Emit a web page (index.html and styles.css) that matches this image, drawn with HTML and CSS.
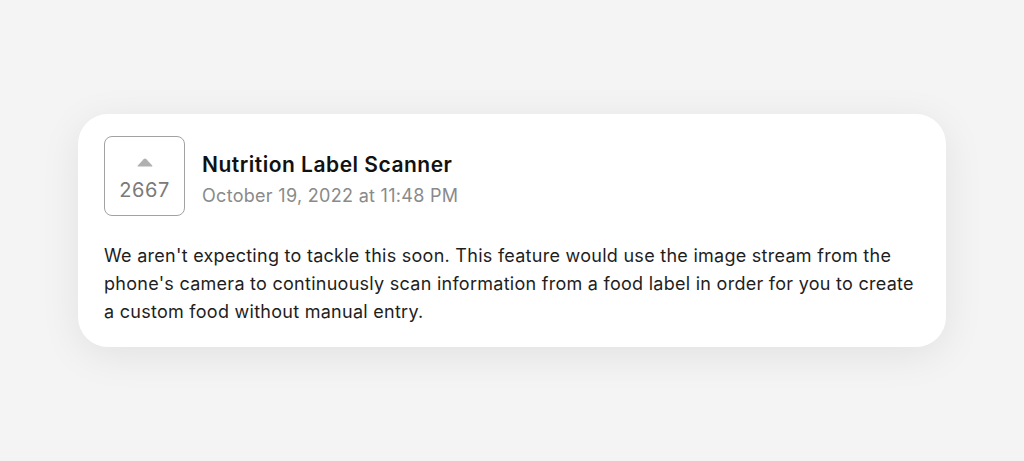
FILE: index.html
```html
<!DOCTYPE html>
<html>
<head>
<meta charset="utf-8">
<link rel="stylesheet" href="styles.css">
</head>
<body>
<div class="card">
  <div class="header">
    <div class="vote">
      <svg class="arrow" width="16" height="9" viewBox="0 0 16 9"><path d="M6.6 1.2 Q8 -0.2 9.4 1.2 L15.2 7.4 Q16 8.6 14.4 8.6 L1.6 8.6 Q0 8.6 0.8 7.4 Z" fill="#b0b0b0"/></svg>
      <span class="count">2667</span>
    </div>
    <div class="meta">
      <div class="title">Nutrition Label Scanner</div>
      <div class="date">October 19, 2022 at 11:48 PM</div>
    </div>
  </div>
  <p class="body">We aren't expecting to tackle this soon. This feature would use the image stream from the phone's camera to continuously scan information from a food label in order for you to create a custom food without manual entry.</p>
</div>
</body>
</html>
```
FILE: styles.css
```css
html, body {
  margin: 0;
  height: 100%;
}
body {
  background: #f4f4f4;
  display: flex;
  align-items: center;
  justify-content: center;
  font-family: Inter, "Noto Sans", sans-serif;
}
.card {
  width: 868px;
  box-sizing: border-box;
  background: #fff;
  border-radius: 30px;
  padding: 22px 26px 21px;
  box-shadow: 0 8px 40px rgba(0,0,0,0.08);
}
.header {
  display: flex;
  gap: 17px;
}
.vote {
  width: 81px;
  height: 80px;
  box-sizing: border-box;
  border: 1px solid #a2a2a2;
  border-radius: 8px;
  display: flex;
  flex-direction: column;
  align-items: center;
  padding-top: 21px;
}
.arrow {
  display: block;
}
.count {
  margin-top: 12px;
  font-size: 20px;
  line-height: 22px;
  letter-spacing: 0.6px;
  color: #7a7a7a;
}
.meta {
  padding-top: 16px;
  display: flex;
  flex-direction: column;
  gap: 8px;
}
.title {
  font-size: 21px;
  line-height: 25px;
  font-weight: 600;
  letter-spacing: 0.5px;
  color: #111;
}
.date {
  font-size: 18px;
  line-height: 22px;
  letter-spacing: 0.3px;
  color: #8a8a8a;
}
.body {
  margin: 26px 0 0;
  font-size: 18px;
  line-height: 28px;
  letter-spacing: 0.27px;
  color: #1e1e1e;
}
```
